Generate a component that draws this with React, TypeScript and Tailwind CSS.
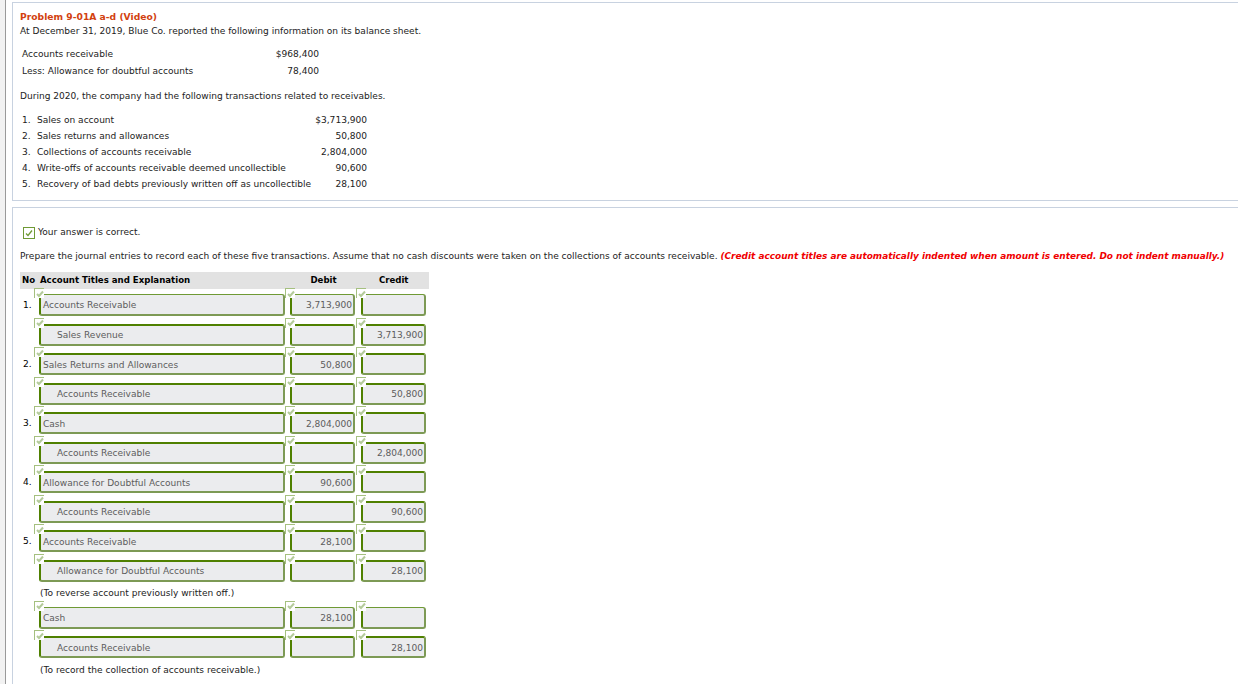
const FONT = 'font-["DejaVu_Sans",Verdana,sans-serif]';

type Entry = { no?: string; title: string; indent?: boolean; debit?: string; credit?: string; thick?: boolean; note?: string };

const balance = [
  ['Accounts receivable', '$968,400'],
  ['Less: Allowance for doubtful accounts', '78,400'],
];

const transactions = [
  ['1.', 'Sales on account', '$3,713,900'],
  ['2.', 'Sales returns and allowances', '50,800'],
  ['3.', 'Collections of accounts receivable', '2,804,000'],
  ['4.', 'Write-offs of accounts receivable deemed uncollectible', '90,600'],
  ['5.', 'Recovery of bad debts previously written off as uncollectible', '28,100'],
];

const entries: Entry[] = [
  { no: '1.', title: 'Accounts Receivable', debit: '3,713,900' },
  { title: 'Sales Revenue', indent: true, credit: '3,713,900', thick: true },
  { no: '2.', title: 'Sales Returns and Allowances', debit: '50,800', thick: true },
  { title: 'Accounts Receivable', indent: true, credit: '50,800', thick: true },
  { no: '3.', title: 'Cash', debit: '2,804,000', thick: true },
  { title: 'Accounts Receivable', indent: true, credit: '2,804,000', thick: true },
  { no: '4.', title: 'Allowance for Doubtful Accounts', debit: '90,600', thick: true },
  { title: 'Accounts Receivable', indent: true, credit: '90,600', thick: true },
  { no: '5.', title: 'Accounts Receivable', debit: '28,100', thick: true },
  { title: 'Allowance for Doubtful Accounts', indent: true, credit: '28,100', thick: true, note: '(To reverse account previously written off.)' },
  { title: 'Cash', debit: '28,100' },
  { title: 'Accounts Receivable', indent: true, credit: '28,100', thick: true, note: '(To record the collection of accounts receivable.)' },
];

function Flag() {
  return (
    <span className="absolute -left-[5px] -top-[6px] w-[10px] h-[10px] bg-white border-l border-t border-[#a5c07f] flex items-center justify-center">
      <svg viewBox="0 0 8 8" className="w-[8px] h-[8px]">
        <path d="M1 4 L3 6 L7 1.5" fill="none" stroke="#b4cb9a" strokeWidth="2" />
      </svg>
    </span>
  );
}

function Field({ width, value, thick, right, indent }: { width: string; value?: string; thick?: boolean; right?: boolean; indent?: boolean }) {
  return (
    <div className={`relative h-[22px] ${width}`}>
      <Flag />
      <div
        className={`h-full flex items-center rounded-[3px] bg-[#ebecee] text-[9.05px] text-[#5d5d5d] border-b-2 border-r-2 border-b-[#7d9a55] border-r-[#7d9a55] border-l-2 border-l-[#4f8000] ${
          thick ? 'border-t-2 border-t-[#4f8000]' : 'border-t border-t-[#6f9a35]'
        } ${right ? 'justify-end pr-[1px]' : indent ? 'pl-[16px]' : 'pl-[2px]'}`}
      >
        <span className="pt-[3px]">{value}</span>
      </div>
    </div>
  );
}

function Row({ entry }: { entry: Entry }) {
  return (
    <>
      <div className="h-[29.5px] flex">
        <div className="w-[19px] pl-[3px] pt-[4px] leading-[14px] text-black">{entry.no}</div>
        <div className="flex gap-[5px]">
          <Field width="w-[246px]" value={entry.title} thick={entry.thick} indent={entry.indent} />
          <Field width="w-[65px]" value={entry.debit} thick={entry.thick} right />
          <Field width="w-[65px] ml-[1px]" value={entry.credit} thick={entry.thick} right />
        </div>
      </div>
      {entry.note && <div className="pl-[20px] h-[16px] -mt-[3px] mb-[4.5px] leading-[14px] text-[#222]">{entry.note}</div>}
    </>
  );
}

export default function App() {
  return (
    <div className={`${FONT} h-[684px] overflow-hidden bg-white text-[9.05px] text-[#222] relative`}>
      <div className="absolute left-0 top-0 bottom-0 w-[5px] bg-[#f2f2f2]" />
      <div className="absolute left-[5px] top-0 bottom-0 w-px bg-[#9a9a9a]" />
      <div className="ml-[12px] flex flex-col gap-[6px] pt-[2px]">
        <section className="h-[199px] border border-r-0 border-[#c8d2e0] pl-[7px] pt-[7px]">
          <h1 className="text-[9.2px] leading-[13px] font-bold text-[#d2410f]">Problem 9-01A a-d (Video)</h1>
          <p className="mt-[1px] leading-[14px]">At December 31, 2019, Blue Co. reported the following information on its balance sheet.</p>
          <table className="mt-[8px] ml-[2px] border-collapse">
            <tbody>
              {balance.map(([label, amount]) => (
                <tr key={label} className="h-[17px]">
                  <td className="w-[253px] p-0 whitespace-nowrap">{label}</td>
                  <td className="w-[44px] p-0 text-right">{amount}</td>
                </tr>
              ))}
            </tbody>
          </table>
          <p className="mt-[9px] leading-[14px]">During 2020, the company had the following transactions related to receivables.</p>
          <table className="mt-[10px] ml-[2px] border-collapse">
            <tbody>
              {transactions.map(([no, label, amount]) => (
                <tr key={no} className="h-[16px]">
                  <td className="w-[15px] p-0">{no}</td>
                  <td className="w-[274px] p-0 whitespace-nowrap">{label}</td>
                  <td className="w-[56px] p-0 text-right">{amount}</td>
                </tr>
              ))}
            </tbody>
          </table>
        </section>

        <section className="border-l border-t border-[#c8d2e0] pl-[7px] pt-[19px] h-[480px]">
          <div className="flex items-center gap-[3px] ml-[3px] h-[12px]">
            <span className="w-[12px] h-[12px] border border-[#6f9a35] flex items-center justify-center">
              <svg viewBox="0 0 8 8" className="w-[8px] h-[8px]">
                <path d="M1 4.5 L3 6.5 L7 1.5" fill="none" stroke="#6f9a35" strokeWidth="1.3" />
              </svg>
            </span>
            <span>Your answer is correct.</span>
          </div>
          <p className="mt-[10px] leading-[14px] whitespace-nowrap">
            Prepare the journal entries to record each of these five transactions. Assume that no cash discounts were taken on the collections of accounts receivable.{' '}
            <em className="text-[8.95px] font-bold text-[#f00000]">(Credit account titles are automatically indented when amount is entered. Do not indent manually.)</em>
          </p>
          <div className="mt-[9px] w-[409px] h-[17px] bg-[#e2e2e2] flex items-center font-bold text-black text-[8.6px]">
            <span className="w-[19px] pl-[2px]">No</span>
            <span className="w-[251px] pl-[1px]">Account Titles and Explanation</span>
            <span className="w-[70px] text-center">Debit</span>
            <span className="w-[71px] text-center">Credit</span>
          </div>
          <div className="mt-[5px]">
            {entries.map((entry, i) => (
              <Row key={i} entry={entry} />
            ))}
          </div>
        </section>
      </div>
    </div>
  );
}
